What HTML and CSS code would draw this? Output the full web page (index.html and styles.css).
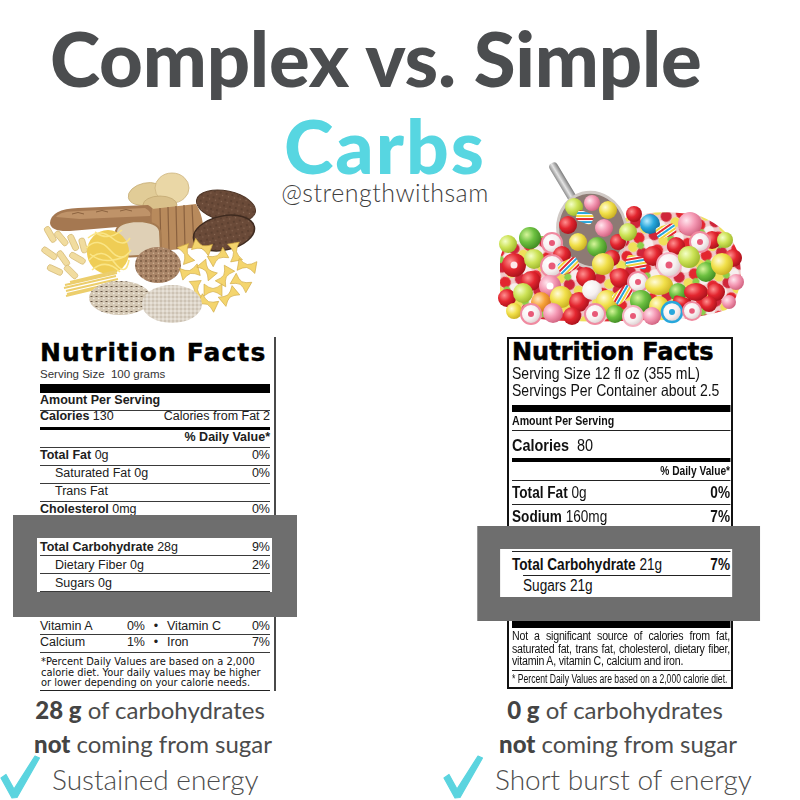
FILE: index.html
```html
<!DOCTYPE html>
<html lang="en">
<head>
<meta charset="utf-8">
<title>Complex vs. Simple Carbs</title>
<link rel="stylesheet" href="styles.css">
</head>
<body>
<div class="page">
  <h1 class="title">Complex vs. Simple</h1>

  <div class="hero">
    <div class="hero-left">
      <svg class="food" viewBox="40 165 230 165" width="230" height="165" aria-hidden="true">
        <defs>
          <pattern id="spk1" width="5" height="5" patternUnits="userSpaceOnUse">
            <rect width="5" height="5" fill="#a98467"/>
            <circle cx="1" cy="1" r="0.9" fill="#74553d"/>
            <circle cx="3.5" cy="3.2" r="0.8" fill="#cfb291"/>
          </pattern>
          <pattern id="spkRice" width="5" height="5" patternUnits="userSpaceOnUse">
            <rect width="5" height="5" fill="#d3c7b3"/>
            <rect x="0.5" y="1" width="2" height="0.9" fill="#5a4838"/>
            <circle cx="3.8" cy="3.5" r="0.8" fill="#f4efe6"/>
          </pattern>
          <pattern id="spkOat" width="4" height="4" patternUnits="userSpaceOnUse">
            <rect width="4" height="4" fill="#dcd4c8"/>
            <circle cx="1" cy="1" r="0.7" fill="#b3a590"/>
            <circle cx="3" cy="3" r="0.8" fill="#f7f3ec"/>
          </pattern>
          <pattern id="dark" width="6" height="6" patternUnits="userSpaceOnUse">
            <rect width="6" height="6" fill="#6a4a38"/>
            <circle cx="2" cy="2" r="0.8" fill="#4a3224"/>
            <circle cx="4.5" cy="4.5" r="0.7" fill="#8a6a55"/>
          </pattern>
        </defs>
        <ellipse cx="226" cy="206" rx="30" ry="15" transform="rotate(12 226 206)" fill="url(#dark)" stroke="#4e3526" stroke-width="1"/>
        <ellipse cx="146" cy="194" rx="18" ry="11" transform="rotate(-12 146 194)" fill="#e1cc97" stroke="#c8b07a" stroke-width="0.8"/>
        <ellipse cx="172" cy="188" rx="17" ry="15" fill="#ead7a6" stroke="#cdb47e" stroke-width="0.8"/>
        <ellipse cx="160" cy="205" rx="17" ry="9" fill="#d9c08a" stroke="#c2a771" stroke-width="0.8"/>
        <path d="M50,223 Q51,209 78,208 L148,205 Q160,212 153,224 L70,231 Q51,232 50,223 Z" fill="#a57851"/>
        <path d="M56,217 Q60,211 80,211 L145,208 Q152,212 150,216 L80,219 Z" fill="#bf9369"/>
        <path d="M72,214 q6,-3 12,0 M96,212 q6,-3 12,0 M120,211 q6,-3 12,0" stroke="#8c6340" stroke-width="1" fill="none"/>
        <path d="M152,209 L196,204 Q206,220 203,247 L160,251 Q150,236 152,209 Z" fill="#b88a5c"/>
        <path d="M160,208 L161,250 M168,207 L169,250 M176,206 L177,249 M184,205 L185,248 M192,205 L194,248" stroke="#8a613f" stroke-width="1.2"/>
        <ellipse cx="224" cy="233" rx="31" ry="17" transform="rotate(-12 224 233)" fill="url(#dark)" stroke="#3e2a1f" stroke-width="1.5"/>
        <path d="M116,231 Q118,222 138,221 Q158,222 160,231 L161,252 Q140,258 120,256 Z" fill="#dfd0b6" stroke="#a57a50" stroke-width="2"/>
        <g fill="#f1dc9f" stroke="#d4b874" stroke-width="0.7">
          <rect x="47" y="226" width="6" height="17" rx="2.5" transform="rotate(-30 50 234)"/>
          <rect x="58" y="230" width="6" height="17" rx="2.5" transform="rotate(-40 61 238)"/>
          <rect x="70" y="234" width="6" height="17" rx="2.5" transform="rotate(-25 73 242)"/>
          <rect x="46" y="245" width="6" height="17" rx="2.5" transform="rotate(-55 49 253)"/>
          <rect x="60" y="250" width="6" height="17" rx="2.5" transform="rotate(-35 63 258)"/>
          <rect x="74" y="250" width="6" height="17" rx="2.5" transform="rotate(-60 77 258)"/>
          <rect x="52" y="262" width="6" height="16" rx="2.5" transform="rotate(-65 55 270)"/>
          <rect x="68" y="264" width="6" height="16" rx="2.5" transform="rotate(-45 71 272)"/>
          <rect x="80" y="238" width="6" height="15" rx="2.5" transform="rotate(-15 83 245)"/>
        </g>
        <ellipse cx="108" cy="252" rx="21" ry="22" fill="#efcd55"/>
        <path d="M88,238 Q100,228 112,238 T130,238 M86,248 Q98,236 110,250 T131,250 M89,260 Q102,246 114,262 T129,260 M92,270 Q106,258 120,272 M95,232 Q108,242 122,230 M90,254 Q104,266 126,256" stroke="#fae586" stroke-width="1.6" fill="none"/>
        <g stroke="#ecce6c" stroke-width="2">
          <path d="M64,288 L116,276 M65,285 L117,273 M66,291 L118,279 M67,294 L118,282 M70,282 L116,271 M66,296 L112,285"/>
        </g>
        <ellipse cx="158" cy="265" rx="23" ry="18" fill="url(#spk1)"/>
        <g fill="#f4d56e" stroke="#cfa83f" stroke-width="0.6">
          <path d="M-9,-6 Q-4,-2 0,-1.5 Q4,-2 9,-6 L9,6 Q4,2 0,1.5 Q-4,2 -9,6 Z" transform="translate(186 254) rotate(70)"/>
          <path d="M-9,-6 Q-4,-2 0,-1.5 Q4,-2 9,-6 L9,6 Q4,2 0,1.5 Q-4,2 -9,6 Z" transform="translate(202 247) rotate(20)"/>
          <path d="M-9,-6 Q-4,-2 0,-1.5 Q4,-2 9,-6 L9,6 Q4,2 0,1.5 Q-4,2 -9,6 Z" transform="translate(218 257) rotate(-30)"/>
          <path d="M-9,-6 Q-4,-2 0,-1.5 Q4,-2 9,-6 L9,6 Q4,2 0,1.5 Q-4,2 -9,6 Z" transform="translate(235 252) rotate(80)"/>
          <path d="M-9,-6 Q-4,-2 0,-1.5 Q4,-2 9,-6 L9,6 Q4,2 0,1.5 Q-4,2 -9,6 Z" transform="translate(247 266) rotate(10)"/>
          <path d="M-9,-6 Q-4,-2 0,-1.5 Q4,-2 9,-6 L9,6 Q4,2 0,1.5 Q-4,2 -9,6 Z" transform="translate(190 272) rotate(-15)"/>
          <path d="M-9,-6 Q-4,-2 0,-1.5 Q4,-2 9,-6 L9,6 Q4,2 0,1.5 Q-4,2 -9,6 Z" transform="translate(207 270) rotate(50)"/>
          <path d="M-9,-6 Q-4,-2 0,-1.5 Q4,-2 9,-6 L9,6 Q4,2 0,1.5 Q-4,2 -9,6 Z" transform="translate(225 276) rotate(-60)"/>
          <path d="M-9,-6 Q-4,-2 0,-1.5 Q4,-2 9,-6 L9,6 Q4,2 0,1.5 Q-4,2 -9,6 Z" transform="translate(241 283) rotate(30)"/>
          <path d="M-9,-6 Q-4,-2 0,-1.5 Q4,-2 9,-6 L9,6 Q4,2 0,1.5 Q-4,2 -9,6 Z" transform="translate(196 290) rotate(85)"/>
          <path d="M-9,-6 Q-4,-2 0,-1.5 Q4,-2 9,-6 L9,6 Q4,2 0,1.5 Q-4,2 -9,6 Z" transform="translate(213 290) rotate(0)"/>
          <path d="M-9,-6 Q-4,-2 0,-1.5 Q4,-2 9,-6 L9,6 Q4,2 0,1.5 Q-4,2 -9,6 Z" transform="translate(229 296) rotate(-40)"/>
          <path d="M-9,-6 Q-4,-2 0,-1.5 Q4,-2 9,-6 L9,6 Q4,2 0,1.5 Q-4,2 -9,6 Z" transform="translate(208 303) rotate(25)"/>
        </g>
        <ellipse cx="120" cy="298" rx="31" ry="17" fill="url(#spkRice)"/>
        <ellipse cx="172" cy="304" rx="30" ry="19" fill="url(#spkOat)"/>
      </svg>
    </div>

    <div class="hero-center">
      <div class="carbs">Carbs</div>
      <div class="handle">@strengthwithsam</div>
    </div>

    <div class="hero-right">
      <svg class="candy" viewBox="490 155 260 175" width="260" height="175" aria-hidden="true">
        <defs>
          <radialGradient id="cr" cx="35%" cy="35%" r="70%"><stop offset="0" stop-color="#ff9090"/><stop offset=".5" stop-color="#e3262f"/><stop offset="1" stop-color="#a8101a"/></radialGradient>
          <radialGradient id="cg" cx="35%" cy="35%" r="70%"><stop offset="0" stop-color="#d6f59a"/><stop offset=".5" stop-color="#6cc040"/><stop offset="1" stop-color="#3f8a22"/></radialGradient>
          <radialGradient id="cy" cx="35%" cy="35%" r="70%"><stop offset="0" stop-color="#fffbd8"/><stop offset=".5" stop-color="#f1e04a"/><stop offset="1" stop-color="#c9ae20"/></radialGradient>
          <radialGradient id="co" cx="35%" cy="35%" r="70%"><stop offset="0" stop-color="#ffe6c0"/><stop offset=".5" stop-color="#f7a33a"/><stop offset="1" stop-color="#d0701a"/></radialGradient>
          <radialGradient id="cp" cx="35%" cy="35%" r="70%"><stop offset="0" stop-color="#ffe6ee"/><stop offset=".5" stop-color="#f59ab5"/><stop offset="1" stop-color="#d0607e"/></radialGradient>
          <radialGradient id="cb" cx="35%" cy="35%" r="70%"><stop offset="0" stop-color="#b8edff"/><stop offset=".5" stop-color="#27a7dc"/><stop offset="1" stop-color="#11709c"/></radialGradient>
          <radialGradient id="cl" cx="35%" cy="35%" r="70%"><stop offset="0" stop-color="#f4ffc8"/><stop offset=".5" stop-color="#cde357"/><stop offset="1" stop-color="#9cb52a"/></radialGradient>
          <radialGradient id="cw" cx="35%" cy="35%" r="70%"><stop offset="0" stop-color="#ffffff"/><stop offset=".6" stop-color="#f6f0f0"/><stop offset="1" stop-color="#d8caca"/></radialGradient>
          <linearGradient id="metal" x1="0" y1="0" x2="1" y2="0"><stop offset="0" stop-color="#8c8c8c"/><stop offset=".45" stop-color="#e4e4e4"/><stop offset="1" stop-color="#7a7a7a"/></linearGradient>
          <pattern id="st" width="9" height="9" patternUnits="userSpaceOnUse" patternTransform="rotate(70)">
            <rect width="9" height="9" fill="#ffffff"/>
            <rect width="2" height="9" fill="#e3262f"/>
            <rect x="3" width="2" height="9" fill="#27a7dc"/>
            <rect x="6" width="2" height="9" fill="#f1d23a"/>
          </pattern>
          <pattern id="mix" width="22" height="22" patternUnits="userSpaceOnUse" patternTransform="rotate(33)">
            <rect width="22" height="22" fill="#f0c9c9"/>
            <circle cx="5.5" cy="5.5" r="5.5" fill="#e3262f"/>
            <circle cx="16.5" cy="5.5" r="5" fill="#f7eeee"/>
            <circle cx="5.5" cy="16.5" r="5" fill="#efe05a"/>
            <circle cx="16.5" cy="16.5" r="5.5" fill="#d0263a"/>
            <circle cx="11" cy="11" r="3.5" fill="#8ccf4a"/>
          </pattern>
        </defs>
        <path d="M500,262 Q500,244 520,240 Q545,232 560,240 L628,217 Q662,208 700,216 Q735,230 740,262 Q744,295 726,310 Q690,322 640,320 Q580,324 530,318 Q503,312 500,290 Z" fill="url(#mix)"/>
        <rect x="560" y="160" width="9" height="50" rx="4" fill="url(#metal)" transform="rotate(-31 564 185)"/>
        <ellipse cx="592" cy="230" rx="34" ry="38" transform="rotate(-15 592 230)" fill="#8d7a74" stroke="#d0c9c5" stroke-width="3"/>
        <circle cx="634" cy="214" r="8" fill="url(#cr)"/>
        <circle cx="650" cy="224" r="10" fill="url(#cb)"/>
        <rect x="656" y="225" width="20" height="12" rx="4" fill="url(#st)" transform="rotate(-15 666 231)"/>
        <circle cx="690" cy="224" r="12" fill="url(#cp)"/>
        <circle cx="712" cy="240" r="9" fill="url(#cr)"/>
        <circle cx="733" cy="258" r="9" fill="url(#cr)"/>
        <circle cx="508" cy="244" r="9" fill="url(#cl)"/>
        <circle cx="530" cy="238" r="11" fill="url(#cg)"/>
        <circle cx="552" cy="243" r="10" fill="url(#cw)" stroke="#f08aa0" stroke-width="2"/><circle cx="552" cy="243" r="3" fill="#e85a78"/>
        <circle cx="574" cy="207" r="9" fill="url(#cl)"/>
        <circle cx="592" cy="203" r="8" fill="url(#cp)"/>
        <circle cx="608" cy="210" r="9" fill="url(#cy)"/>
        <circle cx="568" cy="225" r="9" fill="url(#cr)"/>
        <rect x="576" y="212" width="17" height="11" rx="4" fill="url(#st)" transform="rotate(20 585 218)"/>
        <circle cx="604" cy="228" r="9" fill="url(#cp)"/>
        <circle cx="618" cy="242" r="8" fill="url(#cr)"/>
        <circle cx="578" cy="242" r="9" fill="url(#cy)"/>
        <circle cx="597" cy="247" r="10" fill="url(#cg)"/>
        <circle cx="612" cy="258" r="8" fill="url(#cr)"/>
        <circle cx="562" cy="255" r="9" fill="url(#cr)"/>
        <circle cx="628" cy="232" r="9" fill="url(#cl)"/>
        <circle cx="676" cy="246" r="9" fill="url(#cr)"/>
        <circle cx="700" cy="242" r="10" fill="url(#cw)" stroke="#f08aa0" stroke-width="2"/><circle cx="700" cy="242" r="3" fill="#e85a78"/>
        <circle cx="725" cy="240" r="8" fill="url(#cl)"/>
        <circle cx="514" cy="265" r="12" fill="url(#cr)"/><circle cx="514" cy="265" r="3.5" fill="#fde8ea"/>
        <circle cx="534" cy="259" r="10" fill="url(#cl)"/>
        <circle cx="552" cy="266" r="11" fill="url(#cw)" stroke="#f08aa0" stroke-width="2"/><circle cx="552" cy="266" r="3.5" fill="#e85a78"/>
        <rect x="558" y="260" width="21" height="12" rx="4" fill="url(#st)" transform="rotate(-25 568 266)"/>
        <circle cx="531" cy="281" r="10" fill="url(#cr)"/>
        <circle cx="550" cy="286" r="11" fill="url(#cp)"/><circle cx="550" cy="286" r="3.5" fill="#fff"/>
        <circle cx="586" cy="277" r="10" fill="url(#cr)"/>
        <circle cx="603" cy="264" r="11" fill="url(#cy)"/>
        <circle cx="620" cy="278" r="10" fill="url(#cr)"/>
        <rect x="626" y="256" width="21" height="12" rx="4" fill="url(#st)" transform="rotate(10 636 262)"/>
        <circle cx="653" cy="256" r="10" fill="url(#cr)"/>
        <circle cx="669" cy="265" r="12" fill="url(#cw)" stroke="#f4b0c0" stroke-width="2"/><circle cx="669" cy="265" r="3.5" fill="#e85a78"/>
        <circle cx="689" cy="257" r="11" fill="url(#cl)"/>
        <circle cx="706" cy="272" r="10" fill="url(#cg)"/>
        <circle cx="722" cy="264" r="11" fill="url(#cy)"/>
        <circle cx="736" cy="282" r="8" fill="url(#cp)"/>
        <circle cx="638" cy="282" r="10" fill="url(#cw)" stroke="#f08aa0" stroke-width="2"/><circle cx="638" cy="282" r="3" fill="#e85a78"/>
        <ellipse cx="659" cy="285" rx="14" ry="10" fill="url(#cy)"/>
        <circle cx="678" cy="292" r="9" fill="url(#cg)"/>
        <ellipse cx="696" cy="292" rx="12" ry="9" fill="url(#cr)"/>
        <circle cx="716" cy="292" r="9" fill="url(#cr)"/>
        <circle cx="729" cy="302" r="7" fill="url(#cp)"/>
        <circle cx="507" cy="298" r="9" fill="url(#cr)"/>
        <circle cx="523" cy="293" r="10" fill="url(#cl)"/>
        <circle cx="541" cy="302" r="10" fill="url(#co)"/>
        <circle cx="561" cy="297" r="11" fill="url(#cy)"/>
        <circle cx="579" cy="302" r="10" fill="url(#cr)"/>
        <circle cx="592" cy="290" r="10" fill="url(#cw)"/>
        <circle cx="607" cy="301" r="11" fill="url(#cy)"/>
        <rect x="612" y="289" width="21" height="12" rx="4" fill="url(#st)" transform="rotate(-40 622 295)"/>
        <circle cx="641" cy="301" r="11" fill="url(#cg)"/>
        <circle cx="659" cy="306" r="10" fill="url(#cy)"/>
        <rect x="673" y="297" width="18" height="11" rx="3" fill="url(#cr)" transform="rotate(15 682 302)"/>
        <circle cx="514" cy="311" r="8" fill="url(#cy)"/>
        <circle cx="531" cy="314" r="10" fill="url(#cw)" stroke="#f08aa0" stroke-width="2"/><circle cx="531" cy="314" r="3" fill="#e85a78"/>
        <circle cx="553" cy="313" r="10" fill="url(#cp)"/>
        <circle cx="572" cy="316" r="9" fill="url(#cr)"/>
        <circle cx="595" cy="314" r="10" fill="url(#cw)" stroke="#f08aa0" stroke-width="2"/><circle cx="595" cy="314" r="3" fill="#e85a78"/>
        <circle cx="615" cy="314" r="9" fill="url(#cg)"/>
        <circle cx="633" cy="316" r="10" fill="url(#cw)" stroke="#f4b0c0" stroke-width="2"/><circle cx="633" cy="316" r="3" fill="#e85a78"/>
        <circle cx="652" cy="316" r="9" fill="url(#cp)"/>
        <circle cx="672" cy="312" r="10" fill="url(#cw)" stroke="#27a7dc" stroke-width="2.5"/><circle cx="672" cy="312" r="3" fill="#27a7dc"/>
        <circle cx="692" cy="311" r="9" fill="url(#cw)" stroke="#f08aa0" stroke-width="2"/><circle cx="692" cy="311" r="2.8" fill="#e85a78"/>
        <circle cx="709" cy="304" r="8" fill="url(#cr)"/>
      </svg>
    </div>
  </div>

  <div class="labels">
    <div class="label-wrap label-left">
      <div class="nfa">
        <div class="nfa-title">Nutrition Facts</div>
        <div class="nfa-serving">Serving Size&nbsp; 100 grams</div>
        <div class="nfa-bar"></div>
        <div class="nfa-row"><b>Amount Per Serving</b></div>
        <div class="nfa-row nfa-cal"><span><b>Calories</b> 130</span><span>Calories from Fat 2</span></div>
        <div class="nfa-row nfa-dv"><b>% Daily Value*</b></div>
        <div class="nfa-row"><span><b>Total Fat</b> 0g</span><span>0%</span></div>
        <div class="nfa-row nfa-sub"><span>Saturated Fat 0g</span><span>0%</span></div>
        <div class="nfa-row nfa-sub"><span>Trans Fat</span></div>
        <div class="nfa-row"><span><b>Cholesterol</b> 0mg</span><span>0%</span></div>
        <div class="nfa-row"><span><b>Sodium</b> 1mg</span><span>0%</span></div>
        <div class="nfa-carbs">
          <div class="nfa-row nfa-c"><span><b>Total Carbohydrate</b> 28g</span><span>9%</span></div>
          <div class="nfa-row nfa-c nfa-sub"><span>Dietary Fiber 0g</span><span>2%</span></div>
          <div class="nfa-row nfa-c nfa-sub"><span>Sugars 0g</span></div>
        </div>
        <div class="nfa-row"><span><b>Protein</b> 3g</span></div>
        <div class="nfa-bar nfa-bar2"></div>
        <div class="nfa-row nfa-c nfa-vit"><span class="v-name">Vitamin A</span><span class="v-pct">0%</span><span class="v-dot">•</span><span class="v-name2">Vitamin C</span><span>0%</span></div>
        <div class="nfa-row nfa-vit"><span class="v-name">Calcium</span><span class="v-pct">1%</span><span class="v-dot">•</span><span class="v-name2">Iron</span><span>7%</span></div>
        <div class="nfa-foot">*Percent Daily Values are based on a 2,000<br>calorie diet. Your daily values may be higher<br>or lower depending on your calorie needs.</div>
      </div>
      <div class="mask mask-left"></div>
    </div>

    <div class="label-wrap label-right">
      <div class="nfb">
        <div class="nfb-title">Nutrition Facts</div>
        <div class="nfb-body">
          <div class="nfb-serving">Serving Size 12 fl oz (355 mL)</div>
          <div class="nfb-serving">Servings Per Container about 2.5</div>
          <div class="nfb-bar"></div>
          <div class="nfb-amount">Amount Per Serving</div>
          <div class="nfb-cal"><b>Calories</b>&nbsp; 80</div>
          <div class="nfb-dv">% Daily Value*</div>
          <div class="nfb-row"><span><b>Total Fat</b> 0g</span><b>0%</b></div>
          <div class="nfb-row"><span><b>Sodium</b> 160mg</span><b>7%</b></div>
          <div class="nfb-row nfb-hidden"><span><b>Potassium</b> 0mg</span><b>0%</b></div>
          <div class="nfb-carbs">
            <div class="nfb-row nfb-tc"><span><b>Total Carbohydrate</b> 21g</span><b>7%</b></div>
            <div class="nfb-row nfb-sugar"><span>Sugars 21g</span></div>
          </div>
          <div class="nfb-row nfb-protein"><span><b>Protein</b> 0g</span></div>
          <div class="nfb-bar nfb-bar2"></div>
          <div class="nfb-foot">
            <span class="fl fl-j">Not a significant source of calories from fat,</span>
            <span class="fl fl-j">saturated fat, trans fat, cholesterol, dietary fiber,</span>
            <span class="fl">vitamin A, vitamin C, calcium and iron.</span>
          </div>
          <div class="nfb-note"><span>* Percent Daily Values are based on a 2,000 calorie diet.</span></div>
          <div class="mask mask-right"></div>
        </div>
      </div>
    </div>
  </div>

  <div class="captions">
    <div class="cap cap-left">
      <p class="cap-line"><b>28 g</b> of carbohydrates</p>
      <p class="cap-line cap-shift"><b>not</b> coming from sugar</p>
      <p class="cap-check">
        <svg class="check" viewBox="0 0 40 44" width="40" height="44" aria-hidden="true"><path d="M1,23 L6,19.5 L14,34 L35,1 L39.5,3 L17,42.5 L12,43 Z" fill="#5bd4df" stroke="#5bd4df" stroke-width="1.2" stroke-linejoin="round"/></svg>
        <span>Sustained energy</span>
      </p>
    </div>
    <div class="cap cap-right">
      <p class="cap-line"><b>0 g</b> of carbohydrates</p>
      <p class="cap-line cap-shift"><b>not</b> coming from sugar</p>
      <p class="cap-check">
        <svg class="check" viewBox="0 0 40 44" width="40" height="44" aria-hidden="true"><path d="M1,23 L6,19.5 L14,34 L35,1 L39.5,3 L17,42.5 L12,43 Z" fill="#5bd4df" stroke="#5bd4df" stroke-width="1.2" stroke-linejoin="round"/></svg>
        <span>Short burst of energy</span>
      </p>
    </div>
  </div>
</div>
</body>
</html>
```

FILE: styles.css
```css
* { box-sizing: border-box; margin: 0; padding: 0; }
html, body { background: #ffffff; }
body {
  width: 800px;
  height: 800px;
  overflow: hidden;
  font-family: "Liberation Sans", Arial, sans-serif;
  color: #1c1c1c;
}
.page { width: 800px; height: 800px; overflow: hidden; }

/* ---------- header ---------- */
.title {
  font-family: Lato, "Noto Sans", sans-serif;
  font-weight: 900;
  font-size: 76px;
  line-height: 76px;
  letter-spacing: -0.2px;
  color: #4b4d4f;
  margin: 20px 0 0 50px;
  white-space: nowrap;
}
.hero {
  display: grid;
  grid-template-columns: 280px 210px 310px;
  height: 241px;
}
.food { display: block; margin: 69px 0 0 40px; }
.candy { display: block; margin-top: 59px; }
.hero-center { text-align: center; padding-top: 17px; }
.carbs {
  font-family: Lato, "Noto Sans", sans-serif;
  font-weight: 900;
  font-size: 75px;
  line-height: 64px;
  letter-spacing: 2px;
  color: #57d6e1;
}
.handle {
  font-family: Lato, "Noto Sans", sans-serif;
  font-weight: 300;
  font-size: 25px;
  line-height: 26px;
  letter-spacing: 0.5px;
  color: #3f3f3f;
  margin-top: 2px;
}

/* ---------- labels ---------- */
.labels {
  display: grid;
  grid-template-columns: 300px 500px;
  height: 356px;
}
.label-wrap { position: relative; }
.mask { position: absolute; z-index: 1; background: #6e6e6e; }
.mask-left { left: 13px; top: 178px; width: 284px; height: 102px; }

/* left label (classic) */
.nfa {
  margin-left: 38px;
  width: 238px;
  padding: 0 4px 0 2px;
  border-right: 2px solid #4a4a4a;
  font-size: 12.5px;
  color: #202020;
}
.nfa-title {
  font-family: "DejaVu Sans", sans-serif;
  font-weight: 700;
  font-size: 25px;
  line-height: 31px;
  letter-spacing: 1.1px;
  -webkit-text-stroke: 0.4px #000;
  color: #000;
  white-space: nowrap;
}
.nfa-serving { font-size: 11.5px; line-height: 13px; color: #333; }
.nfa-bar { height: 9px; margin-top: 3px; background: #000; }
.nfa-row {
  display: flex;
  justify-content: space-between;
  line-height: 15px;
  padding-bottom: 2px;
  border-bottom: 1px solid #3a3a3a;
  white-space: nowrap;
}
.nfa-row b { font-weight: 700; }
.nfa-cal { line-height: 11px; padding-bottom: 5px; border-bottom-width: 3px; border-bottom-color: #000; }
.nfa-dv { justify-content: flex-end; }
.nfa-sub { padding-left: 15px; }
.nfa-carbs {
  position: relative;
  z-index: 2;
  background: #ffffff;
  margin: 0 -2px 0 -3px;
  padding: 0 2px 0 3px;
}
.nfa-c { padding-top: 2px; padding-bottom: 0; }
.nfa-bar2 { height: 7px; margin-top: 0; }
.nfa-vit { justify-content: flex-start; }
.v-name { width: 66px; }
.v-pct { width: 39px; text-align: right; }
.v-dot { width: 22px; text-align: center; }
.v-name2 { flex: 1; }
.nfa-foot {
  font-family: "DejaVu Sans", sans-serif;
  font-size: 9.9px;
  line-height: 10.7px;
  padding: 4px 0 0 1px;
  height: 38px;
  border-bottom: 1px solid #222;
  color: #111;
  white-space: nowrap;
}

/* right label (condensed: body drawn narrow with scaleX) */
.nfb {
  margin-left: 207px;
  width: 226px;
  border: 2px solid #111;
  padding: 0 1px 0 3px;
  color: #111;
}
.nfb-title {
  font-family: "DejaVu Sans", sans-serif;
  font-weight: 700;
  font-size: 24px;
  line-height: 26px;
  -webkit-text-stroke: 0.5px #000;
  color: #000;
  white-space: nowrap;
}
.nfb-body {
  position: relative;
  width: 256.5px;
  transform: scaleX(0.85);
  transform-origin: 0 0;
  font-family: "Liberation Sans", Arial, sans-serif;
}
.mask-right { left: -41px; top: 161px; width: 333px; height: 95px; }
.nfb-serving { font-size: 16.5px; line-height: 17px; white-space: nowrap; }
.nfb-bar { height: 7px; margin-top: 6px; background: #000; }
.nfb-amount {
  font-size: 12.5px;
  font-weight: 700;
  line-height: 18px;
  border-bottom: 1px solid #222;
}
.nfb-cal {
  font-size: 17px;
  padding-top: 3px;
  line-height: 24px;
  border-bottom: 4px solid #000;
}
.nfb-cal b { font-weight: 700; }
.nfb-dv {
  text-align: right;
  font-size: 12px;
  font-weight: 700;
  padding-top: 1px;
  line-height: 17px;
  border-bottom: 1px solid #222;
}
.nfb-row {
  display: flex;
  justify-content: space-between;
  font-size: 16px;
  line-height: 23px;
  border-bottom: 1px solid #222;
  white-space: nowrap;
}
.nfb-row b { font-weight: 700; }
.nfb-hidden { line-height: 20px; border-bottom: 0; }
.nfb-carbs {
  position: relative;
  z-index: 2;
  background: #ffffff;
  margin: 0 -2.4px 0 -14px;
  padding: 2px 2.4px 0 14px;
}
.nfb-tc { border-top: 1px solid #222; border-bottom: 0; padding-top: 2px; line-height: 21px; }
.nfb-sugar { margin-left: 13px; border-top: 1px solid #222; border-bottom: 0; line-height: 19px; padding-bottom: 2px; }
.nfb-protein { border-bottom: 0; line-height: 24px; }
.nfb-bar2 { margin-top: 0; }
.nfb-foot {
  font-size: 12.5px;
  line-height: 12.5px;
  letter-spacing: -0.25px;
  padding: 2px 0 2px;
  border-bottom: 1px solid #222;
}
.fl { display: block; white-space: nowrap; }
.fl-j { text-align: justify; text-align-last: justify; white-space: normal; }
.nfb-note {
  font-size: 12px;
  line-height: 16px;
  white-space: nowrap;
}
.nfb-note span {
  display: inline-block;
  transform: scaleX(0.845);
  transform-origin: 0 0;
}

/* ---------- captions ---------- */
.captions {
  display: grid;
  grid-template-columns: 300px 500px;
  font-family: Lato, "Noto Sans", sans-serif;
  color: #4c4c4c;
}
.cap-right { padding-left: 130px; }
.cap-line {
  text-align: center;
  font-size: 24px;
  line-height: 34px;
  font-weight: 400;
  white-space: nowrap;
}
.cap-shift { padding-left: 6px; }
.cap-line b { font-weight: 900; color: #444; }
.cap-check {
  display: flex;
  align-items: flex-start;
  font-size: 28px;
  line-height: 36px;
  font-weight: 300;
  white-space: nowrap;
}
.cap-right .cap-check { padding-left: 13px; }
.check { display: block; margin: -6px 12px 0 0; flex: none; }
```
